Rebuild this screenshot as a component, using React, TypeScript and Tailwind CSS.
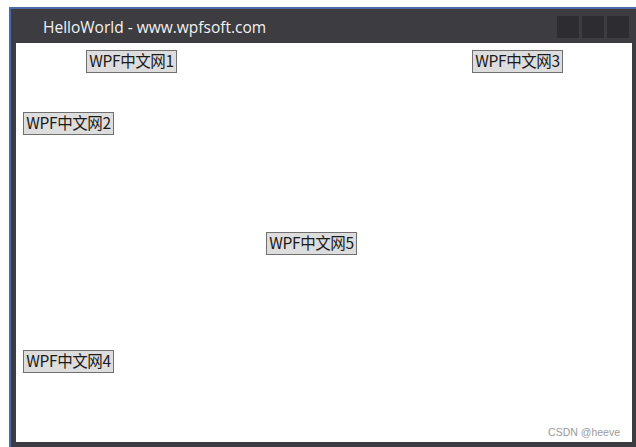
import React from 'react';

const items = [
  { label: 'WPF中文网1', pos: 'left-[70px] top-[7px]' },
  { label: 'WPF中文网3', pos: 'left-[456px] top-[7px]' },
  { label: 'WPF中文网2', pos: 'left-[7px] top-[69px]' },
  { label: 'WPF中文网5', pos: 'left-[250px] top-[189px]' },
  { label: 'WPF中文网4', pos: 'left-[7px] top-[307px]' },
];

export default function App() {
  return (
    <div className="w-[636px] h-[447px] overflow-hidden bg-white pt-[7px] pl-[9px]">
      {/* window */}
      <div className="flex h-[440px] w-[627px] flex-col border-l-2 border-t-2 border-[#4a6aa8] bg-[#3c3c41]">
        {/* title bar */}
        <div className="flex h-[34px] items-center justify-between pl-[32px] pr-[7px]">
          <span className="pt-[3px] text-[15.5px] font-medium text-[#f2f2f2] font-['Open_Sans','Noto_Sans',sans-serif]">
            HelloWorld - www.wpfsoft.com
          </span>
          <div className="flex gap-[3px] pt-[2px]">
            <div className="h-[22px] w-[22px] bg-[#2d2d31]" />
            <div className="h-[22px] w-[22px] bg-[#2d2d31]" />
            <div className="h-[22px] w-[22px] bg-[#2d2d31]" />
          </div>
        </div>
        {/* client canvas */}
        <div className="relative ml-[5px] mr-[4px] mb-[5px] flex-1 bg-white">
          {items.map((it) => (
            <div
              key={it.label}
              className={`absolute ${it.pos} flex h-[23px] w-[91px] items-center justify-center border border-[#707070] bg-[#dddddd] pb-[1px] text-[15.5px] leading-none tracking-[-0.4px] text-[#1a1a1a] font-['Noto_Sans_CJK_SC',sans-serif]`}
            >
              {it.label}
            </div>
          ))}
          <span className="absolute bottom-[1px] right-[12px] text-[10.5px] text-[#9a9a9a] font-['Liberation_Sans',sans-serif]">
            CSDN @heeve
          </span>
        </div>
      </div>
    </div>
  );
}
